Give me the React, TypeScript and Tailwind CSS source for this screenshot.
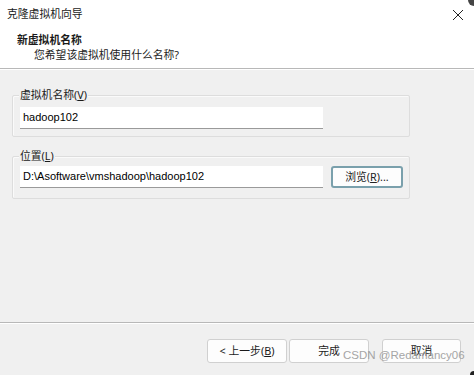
import React from "react";

const F = { fontFamily: '"Noto Sans", "Noto Sans CJK SC", sans-serif' };
const L = { fontFamily: '"Liberation Sans", "Noto Sans CJK SC", Arial, sans-serif' };

export default function App() {
  return (
    <div
      className="w-[474px] h-[375px] bg-[#f0f0f0] flex flex-col overflow-hidden relative text-[#1a1a1a]"
      style={F}
    >
      {/* title + header (white) */}
      <div className="bg-white h-[69px] flex flex-col border-b border-[#b8b8b8]">
        <div className="h-[28px] flex items-center justify-between pl-[7px] pr-[10px]">
          <span className="text-[10.8px] leading-none">克隆虚拟机向导</span>
          <svg width="12" height="12" viewBox="0 0 12 12" className="mt-[1px]">
            <path d="M1 1 L11 11 M11 1 L1 11" stroke="#222" strokeWidth="1" />
          </svg>
        </div>
        <div className="pl-[17px] pt-[7px] text-[10.8px] font-bold leading-none">新虚拟机名称</div>
        <div className="pl-[34px] pt-[4px] text-[10.8px] leading-none text-[#222]">您希望该虚拟机使用什么名称?</div>
      </div>
      <div className="h-px bg-white" />

      {/* body */}
      <div className="flex-1 flex flex-col pl-[12px] pt-[25px]">
        {/* group 1 */}
        <div className="w-[398px] h-[42px] border border-[#dddddd] rounded-[2px] relative shadow-[inset_1px_1px_0_#fafafa]">
          <div className="absolute left-[6px] top-[-8px] bg-[#f0f0f0] px-[1px] text-[10.8px] leading-[14px]">
            虚拟机名称(<span className="underline">V</span>)
          </div>
          <div
            className="absolute left-[7px] top-[11px] w-[303px] h-[22px] bg-white border-b border-[#9a9a9a] flex items-center pl-[3px] text-[11px] text-black"
            style={L}
          >
            hadoop102
          </div>
        </div>

        {/* group 2 */}
        <div className="mt-[19px] w-[398px] h-[43px] border border-[#dddddd] rounded-[2px] relative shadow-[inset_1px_1px_0_#fafafa]">
          <div className="absolute left-[6px] top-[-8px] bg-[#f0f0f0] px-[1px] text-[10.8px] leading-[14px]">
            位置(<span className="underline">L</span>)
          </div>
          <div
            className="absolute left-[7px] top-[9px] w-[303px] h-[22px] bg-white border-b border-[#9a9a9a] flex items-center pl-[3px] text-[11px] text-black"
            style={L}
          >
            D:\Asoftware\vmshadoop\hadoop102
          </div>
          <div className="absolute left-[318px] top-[9px] w-[72px] h-[22px] bg-[#fdfdfd] border-2 border-[#7aa0ac] rounded-[3px] flex items-center justify-center text-[10.8px] text-[#222]">
            浏览(<span className="underline">R</span>)...
          </div>
        </div>
      </div>

      {/* footer */}
      <div className="h-px bg-[#b8b8b8]" />
      <div className="h-px bg-white" />
      <div className="h-[51px] flex pt-[15px] pl-[207px]">
        <div className="w-[80px] h-[24px] bg-[#fdfdfd] border border-[#d0d0d0] rounded-[3px] flex items-center justify-center text-[10.8px]">
          &lt; 上一步(<span className="underline">B</span>)
        </div>
        <div className="ml-[2px] w-[80px] h-[24px] bg-[#fdfdfd] border border-[#d0d0d0] rounded-[3px] flex items-center justify-center text-[10.8px]">
          完成
        </div>
        <div className="ml-[13px] w-[79px] h-[24px] bg-[#fdfdfd] border border-[#d0d0d0] rounded-[3px] flex items-center justify-center text-[10.8px]">
          取消
        </div>
      </div>

      {/* watermark */}
      <div
        className="absolute left-[343px] top-[350px] whitespace-nowrap text-[11.5px] leading-none text-[#9c9c9c] opacity-90"
        style={{ fontFamily: '"Liberation Sans", Arial, sans-serif' }}
      >
        CSDN @Redamancy06
      </div>

      {/* window corner shadows */}
      <div className="absolute right-0 top-0 w-[6px] h-[6px] bg-[#444] rounded-bl-[6px]" />
      <div className="absolute right-0 bottom-0 w-[4px] h-[4px] bg-[#222] rounded-tl-[4px]" />
    </div>
  );
}
